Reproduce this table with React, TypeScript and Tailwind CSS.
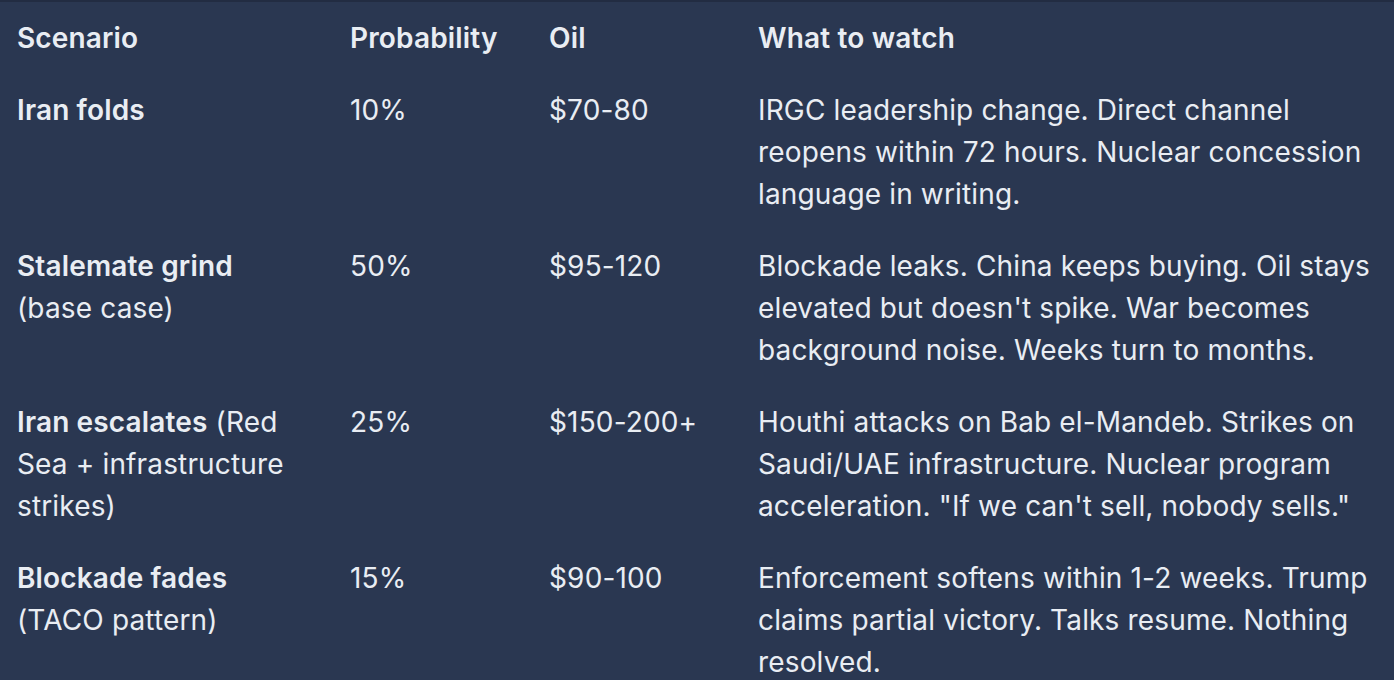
const rows = [
  {
    scenario: <><span className="font-semibold">Iran folds</span></>,
    prob: '10%',
    oil: '$70-80',
    watch: 'IRGC leadership change. Direct channel reopens within 72 hours. Nuclear concession language in writing.',
  },
  {
    scenario: <><span className="font-semibold">Stalemate grind</span> (base case)</>,
    prob: '50%',
    oil: '$95-120',
    watch: "Blockade leaks. China keeps buying. Oil stays elevated but doesn't spike. War becomes background noise. Weeks turn to months.",
  },
  {
    scenario: <><span className="font-semibold">Iran escalates</span> (Red Sea + infrastructure strikes)</>,
    prob: '25%',
    oil: '$150-200+',
    watch: 'Houthi attacks on Bab el-Mandeb. Strikes on Saudi/UAE infrastructure. Nuclear program acceleration. "If we can\'t sell, nobody sells."',
  },
  {
    scenario: <><span className="font-semibold">Blockade fades</span> (TACO pattern)</>,
    prob: '15%',
    oil: '$90-100',
    watch: 'Enforcement softens within 1-2 weeks. Trump claims partial victory. Talks resume. Nothing resolved.',
  },
]

export default function App() {
  return (
    <div
      className="w-[1394px] h-[680px] overflow-hidden bg-[#2a3751] border-t-2 border-[#222c42] text-[#e9edf3] text-[28px] leading-[42px] tracking-[0.15px]"
      style={{ fontFamily: 'Inter, "Noto Sans", sans-serif' }}
    >
      <div className="grid grid-cols-[333px_199px_209px_1fr] pl-[17px]">
        {/* Header */}
        <div className="py-[15px] font-semibold">Scenario</div>
        <div className="py-[15px] font-semibold">Probability</div>
        <div className="py-[15px] font-semibold">Oil</div>
        <div className="py-[15px] pr-[18px] font-semibold">What to watch</div>

        {rows.map((r, i) => (
          <div key={i} className="contents">
            <div className="py-[15px] pr-[40px]">{r.scenario}</div>
            <div className="py-[15px]">{r.prob}</div>
            <div className="py-[15px]">{r.oil}</div>
            <div className="py-[15px] pr-[14px]">{r.watch}</div>
          </div>
        ))}
      </div>
    </div>
  )
}
